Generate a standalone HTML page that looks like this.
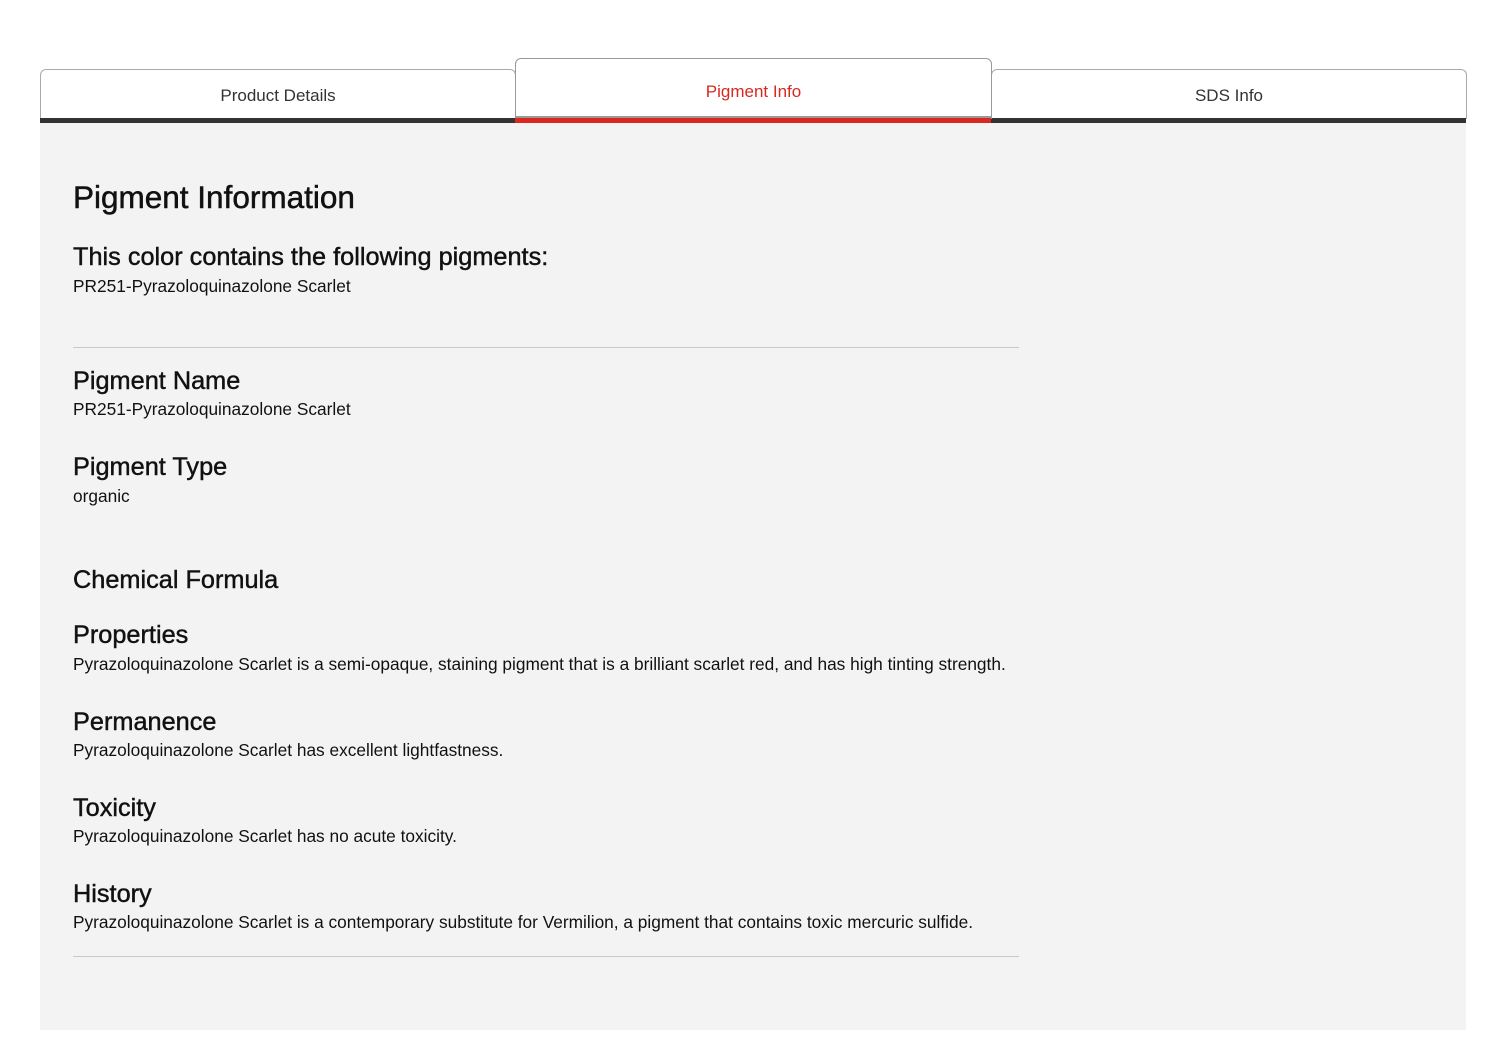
<!DOCTYPE html>
<html><head><meta charset="utf-8"><style>
body{margin:0;width:1500px;height:1052px;background:#fff;position:relative;font-family:"Liberation Sans",sans-serif;color:#111;overflow:hidden}
.tab{position:absolute;background:#fff;border:1px solid #aaa;border-bottom:none;border-radius:6px 6px 0 0;box-sizing:border-box;text-align:center;font-size:17px;color:#333}
.bar{position:absolute;top:118px;height:5px;background:#333}
.panel{position:absolute;left:40px;top:123px;width:1426px;height:907px;background:#f3f3f3}
.t{position:absolute;left:73px;white-space:nowrap;height:30px;line-height:30px}
.h1{font-size:31.5px;height:40px;line-height:40px;-webkit-text-stroke:0.5px #111}
.h3{font-size:25.3px;-webkit-text-stroke:0.45px #111}
.b{font-size:17.3px}
.hr{position:absolute;left:73px;width:946px;height:1px;background:#c8c8c8}
</style></head><body>
<div class="tab" style="left:40px;top:69px;width:476px;height:50px;line-height:52px">Product Details</div>
<div class="tab" style="left:991px;top:69px;width:476px;height:50px;line-height:52px">SDS Info</div>
<div class="bar" style="left:40px;width:1426px"></div>
<div class="tab" style="left:515px;top:58px;width:477px;height:61px;line-height:66px;color:#d8281f;border-color:#999;border-style:solid">Pigment Info</div>
<div class="bar" style="left:515px;width:476px;background:#d8281f"></div>
<div class="panel"></div>
<div class="t h1" style="top:177px">Pigment Information</div>
<div class="t h3" style="top:242px">This color contains the following pigments:</div>
<div class="t b" style="top:271px">PR251-Pyrazoloquinazolone Scarlet</div>
<div class="hr" style="top:347px"></div>
<div class="t h3" style="top:366px">Pigment Name</div>
<div class="t b" style="top:394px">PR251-Pyrazoloquinazolone Scarlet</div>
<div class="t h3" style="top:452px">Pigment Type</div>
<div class="t b" style="top:481px">organic</div>
<div class="t h3" style="top:565px">Chemical Formula</div>
<div class="t h3" style="top:620px">Properties</div>
<div class="t b" style="top:649px">Pyrazoloquinazolone Scarlet is a semi-opaque, staining pigment that is a brilliant scarlet red, and has high tinting strength.</div>
<div class="t h3" style="top:707px">Permanence</div>
<div class="t b" style="top:735px">Pyrazoloquinazolone Scarlet has excellent lightfastness.</div>
<div class="t h3" style="top:793px">Toxicity</div>
<div class="t b" style="top:821px">Pyrazoloquinazolone Scarlet has no acute toxicity.</div>
<div class="t h3" style="top:879px">History</div>
<div class="t b" style="top:907px">Pyrazoloquinazolone Scarlet is a contemporary substitute for Vermilion, a pigment that contains toxic mercuric sulfide.</div>
<div class="hr" style="top:956px"></div>
</body></html>
